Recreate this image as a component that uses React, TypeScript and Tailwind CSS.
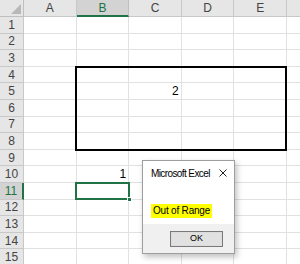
const cols = ['A', 'B', 'C', 'D', 'E', ''];
const rows = Array.from({ length: 15 }, (_, i) => i + 1);

function Cell({ row, col }: { row: number; col: number }) {
  let value = '';
  if (row === 5 && col === 2) value = '2';
  if (row === 10 && col === 1) value = '1';
  return (
    <div className="border-r border-b border-[#e1e1e1] flex items-center justify-end pr-[2px] text-[12px] text-black leading-none">
      {value}
    </div>
  );
}

export default function App() {
  return (
    <div className="relative w-[300px] h-[264px] overflow-hidden bg-white font-['Liberation_Sans',sans-serif]">
      <div className="grid grid-cols-[24px_repeat(6,52.6px)] grid-rows-[17px_repeat(15,16.6px)]">
        {/* corner */}
        <div className="relative bg-[#e6e6e6] border-r border-b border-[#bfbfbf]">
          <div className="absolute right-[2px] bottom-[2px] w-0 h-0 border-l-[10px] border-l-transparent border-b-[10px] border-b-[#b8b8b8]" />
        </div>
        {cols.map((c) =>
          c === 'B' ? (
            <div
              key={c}
              className="bg-[#d3d3d3] border-r border-[#bfbfbf] border-b-2 border-b-[#217346] flex items-center justify-center text-[12px] text-[#217346]"
            >
              {c}
            </div>
          ) : (
            <div
              key={c || 'F'}
              className="bg-[#e6e6e6] border-r border-b border-[#c8c8c8] flex items-center justify-center text-[12px] text-[#444]"
            >
              {c}
            </div>
          )
        )}
        {rows.map((r) => (
          <div key={r} className="contents">
            <div
              className={
                r === 11
                  ? 'bg-[#d3d3d3] border-r-2 border-r-[#217346] border-b border-[#c8c8c8] flex items-center justify-center text-[12px] text-[#217346]'
                  : 'bg-[#e6e6e6] border-r border-b border-[#c8c8c8] flex items-center justify-center text-[12px] text-[#444]'
              }
            >
              {r}
            </div>
            {cols.map((_, ci) => (
              <Cell key={ci} row={r} col={ci} />
            ))}
          </div>
        ))}
      </div>

      {/* shape B4:E8 */}
      <div className="absolute left-[75px] top-[66px] w-[212px] h-[85px] border-2 border-black" />

      {/* active cell B11 */}
      <div className="absolute left-[75px] top-[182px] w-[55px] h-[18px] border-2 border-[#217346]">
        <div className="absolute -right-[4px] -bottom-[4px] w-[5px] h-[5px] bg-[#217346] border border-white" />
      </div>

      {/* msgbox */}
      <div className="absolute left-[142px] top-[160px] w-[93px] h-[94px] bg-white border border-[#9e9e9e] shadow-[2px_3px_6px_rgba(0,0,0,0.25)] flex flex-col">
        <div className="flex items-center justify-between h-[24px] pl-[8px] pr-[7px] text-black whitespace-nowrap">
          <span className="text-[10px] tracking-[-0.6px]">Microsoft Excel</span>
          <svg width="8" height="8" viewBox="0 0 8 8" className="text-[#222]">
            <path d="M0.5 0.5L7.5 7.5M7.5 0.5L0.5 7.5" stroke="currentColor" strokeWidth="1" />
          </svg>
        </div>
        <div className="flex-1 pl-[8px] pt-[12px]">
          <span className="inline-block bg-[#ffff00] px-[2px] py-[1px] text-[10px] leading-[12px] tracking-[-0.2px] text-black whitespace-nowrap">
            Out of Range
          </span>
        </div>
        <div className="h-[29px] bg-[#f0f0f0] flex items-center pl-[27px]">
          <div className="w-[53px] h-[16px] bg-[#e1e1e1] border border-[#7a7a7a] shadow-[inset_0_0_0_1px_#dcdcdc] flex items-center justify-center text-[9px] text-black">
            OK
          </div>
        </div>
      </div>
    </div>
  );
}
